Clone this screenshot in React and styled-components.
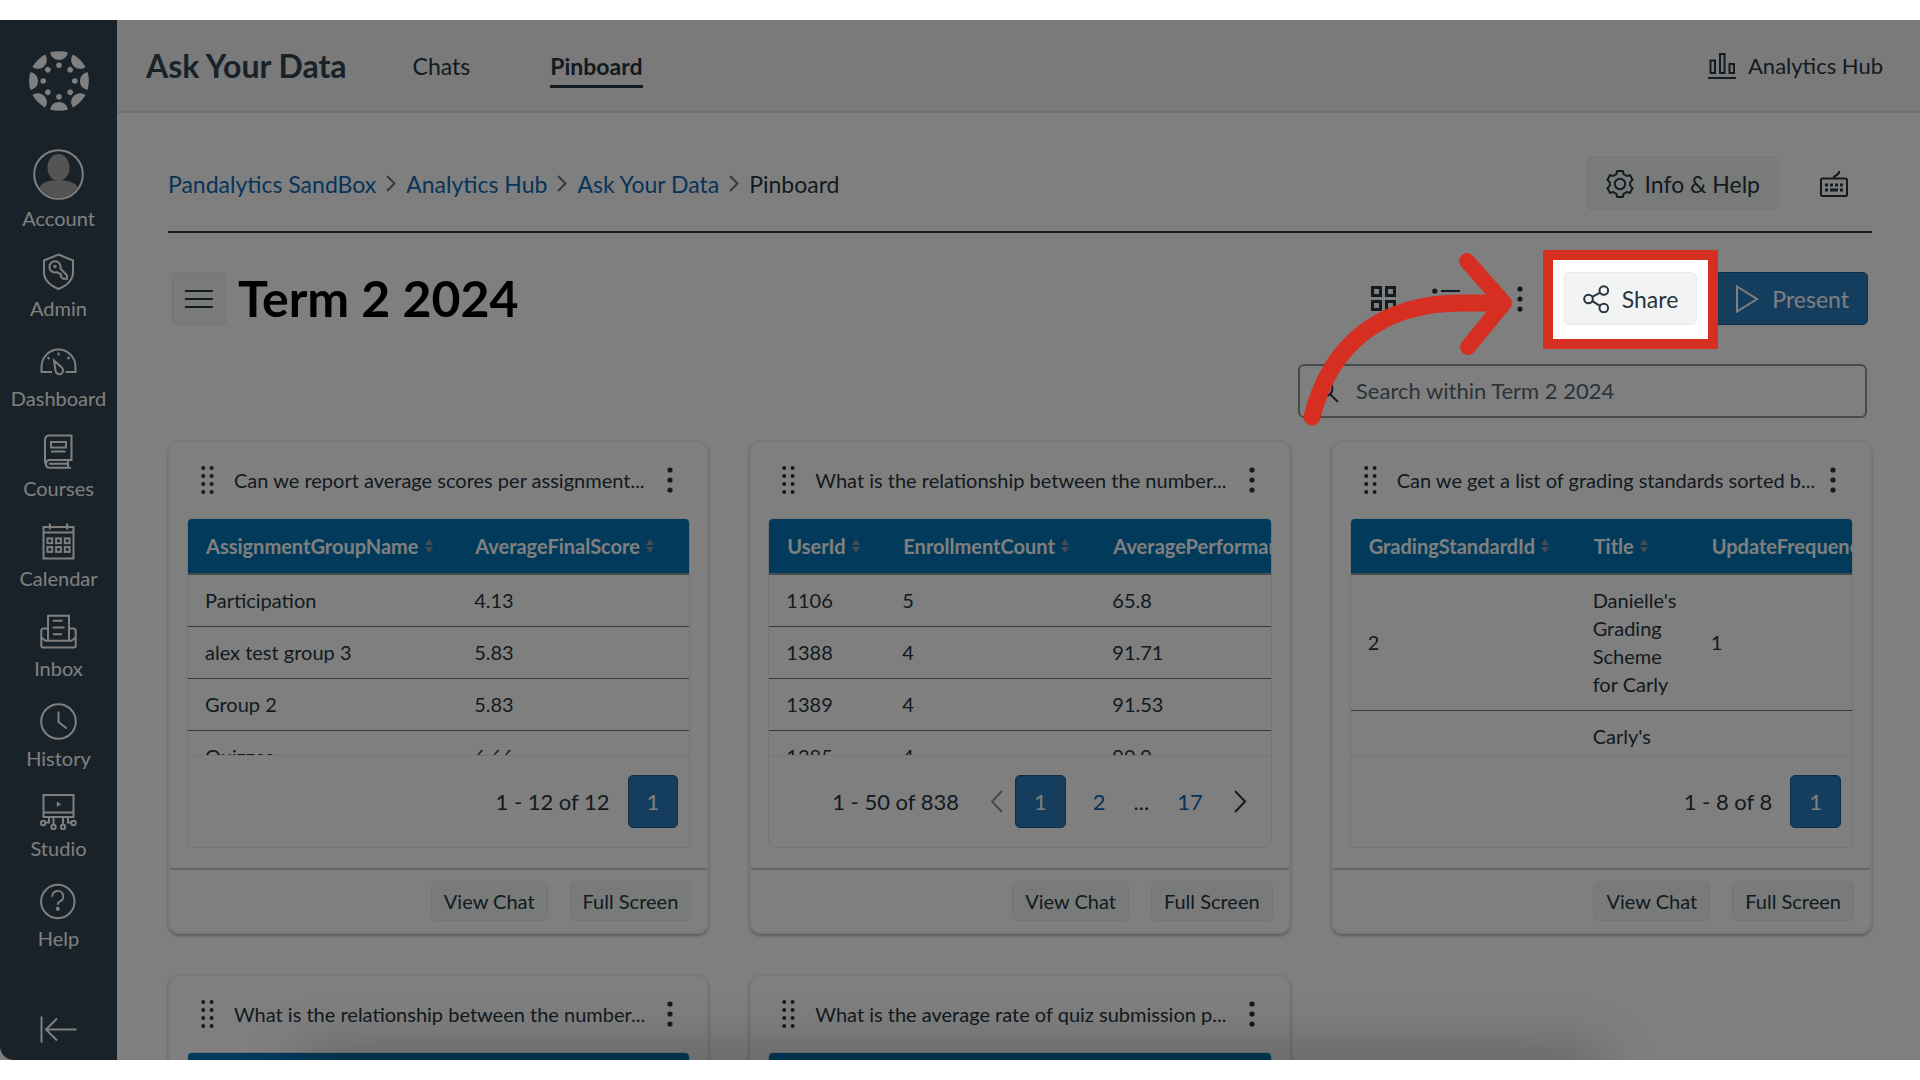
import React, { useState } from "react";
import styled, { createGlobalStyle, ThemeProvider } from "styled-components";

const theme = {
  colors: {
    white: "#ffffff",
    text: "#273540",
    title: "#334451",
    black: "#000000",
    link: "#0e68b3",
    primary: "#2b7abc",
    primaryDark: "#1d5c94",
    header: "#f5f5f5",
    secondary: "#f2f4f4",
    line: "#e8eaec",
    tableHead: "#0374b5",
    rowLine: "#6a7883",
    muted: "#8b969e",
    mark: "#d62f21",
  },
};

const GlobalStyle = createGlobalStyle`
  * {
    box-sizing: border-box;
    margin: 0;
    padding: 0;
  }
  body {
    background: #ffffff;
    font-family: Lato, "Liberation Sans", sans-serif;
    font-size: 22px;
    line-height: 28px;
    color: ${theme.colors.text};
  }
  button,
  input {
    font: inherit;
    color: inherit;
    border: 0;
    background: none;
  }
  button {
    cursor: pointer;
  }
  a {
    color: inherit;
    text-decoration: none;
  }
  svg {
    display: block;
    flex: none;
    fill: none;
    stroke: currentColor;
    stroke-width: 2;
  }
`;

/* ---------- icons ---------- */

const turns = [0, 45, 90, 135, 180, 225, 270, 315];

const CanvasLogo = () => (
  <svg width="60" height="60" viewBox="0 0 60 60">
    {turns.map((deg) => (
      <g
        key={deg}
        transform={`rotate(${deg} 30 30)`}
        fill="currentColor"
        stroke="none"
      >
        <path d="M21.2 1.3Q30 -1 38.8 1.3C38.2 6 34.6 9 30 9S21.8 6 21.2 1.3Z" />
        <circle cx="30" cy="14.2" r="2.8" />
      </g>
    ))}
  </svg>
);

const Avatar = () => (
  <svg width="51" height="51" viewBox="0 0 51 51">
    <clipPath id="avatar-clip">
      <circle cx="25.5" cy="25.5" r="23" />
    </clipPath>
    <g clipPath="url(#avatar-clip)" fill="#a8a8a8" stroke="none">
      <ellipse cx="25.5" cy="18.5" rx="11" ry="13.5" />
      <path d="M5 40C8 34 14 32 20 31.5H31C37 32 43 34 46 40V51H5Z" />
    </g>
    <circle cx="25.5" cy="25.5" r="24.3" />
  </svg>
);

const navIcons = {
  Admin: (
    <>
      <path d="M18.5 1.5L33 7.5V19C33 27 27 32.5 18.5 36C10 32.5 4 27 4 19V7.5Z" />
      <path d="M20.4 15.5L27 22.5V25.8H23.2L20.8 23.5V21.2L16.8 19.2A5.6 5.6 0 1 1 20.4 15.5Z" />
      <circle cx="15" cy="13.5" r="0.8" />
    </>
  ),
  Dashboard: (
    <>
      <path d="M12 29H1.5V24A17 17.5 0 0 1 35.5 24V29H25.5" />
      <path d="M14 17.5L21.8 24.5A3.8 3.8 0 1 1 15.5 27.5Z" />
      <path d="M18.5 9.5V12.5M7.5 14L9.5 16M29.5 14L27.5 16" />
    </>
  ),
  Courses: (
    <>
      <path d="M5 30.5V6.5A4 4 0 0 1 9 2.5H31.5V27H9A4 4 0 0 0 9 34.8H31" />
      <path d="M28 27V34.5M9 30.8H28M11 18.5H25.5" />
      <path d="M11 9H26V14.5H11Z" />
    </>
  ),
  Calendar: (
    <>
      <path d="M3.5 4H33.5V35.5H3.5ZM3.5 9.5H33.5M9.8 0.5V6.5M27.2 0.5V6.5" />
      {[9.8, 18.5, 27.2].map((x) =>
        [17.8, 26.5].map((y) => (
          <rect key={`${x}-${y}`} x={x - 2.4} y={y - 2.4} width="4.8" height="4.8" />
        ))
      )}
    </>
  ),
  Inbox: (
    <>
      <path d="M8 27.5V2.8H29V27.5" />
      <path d="M8 15.5H3.5A2.3 2.3 0 0 0 1.3 17.8V32.5A2 2 0 0 0 3.3 34.5H33.7A2 2 0 0 0 35.7 32.5V17.8A2.3 2.3 0 0 0 33.5 15.5H29" />
      <path d="M1.3 24.5L5.5 27.8H31.5L35.7 24.5M12.8 7.8H22.5M12.8 14.5H24.5M12.8 21.2H22" />
    </>
  ),
  History: (
    <>
      <circle cx="18.5" cy="18.5" r="17.3" />
      <path d="M18.5 8.5V19L26.8 25.5" />
    </>
  ),
  Studio: (
    <>
      <path d="M3.5 2H33.5V24H3.5ZM3.5 19.5H33.5" />
      <path d="M16.8 8.5L21.2 11.2L16.8 14Z" fill="currentColor" stroke="none" />
      <path d="M9 24V29.5H5.5M13.5 24V31.5M23 24V31.5M28 24V29.5H31" />
      <circle cx="3.2" cy="30" r="2.2" />
      <circle cx="13.5" cy="34" r="2.2" />
      <circle cx="23" cy="34" r="2.2" />
      <circle cx="33.5" cy="30" r="2.2" />
    </>
  ),
  Help: (
    <>
      <circle cx="17.8" cy="18.5" r="16.7" />
      <path d="M12.3 13.8A5.5 5.5 0 1 1 19.6 18.6Q17.8 19.5 17.8 21.8" />
      <circle cx="17.8" cy="25.8" r="1.1" fill="currentColor" />
    </>
  ),
};

const gearPoints = turns
  .slice(0, 6)
  .map((_, i) => {
    const point = (r, deg) => {
      const a = ((deg + i * 60 - 90) * Math.PI) / 180;
      return `${(14 + r * Math.cos(a)).toFixed(1)},${(14 + r * Math.sin(a)).toFixed(1)}`;
    };
    return [point(10.4, -20), point(13.3, -12), point(13.3, 12), point(10.4, 20)].join(" ");
  })
  .join(" ");

const GearIcon = () => (
  <svg width="28" height="28" viewBox="0 0 28 28" strokeLinejoin="round">
    <polygon points={gearPoints} />
    <circle cx="14" cy="14" r="5.2" />
  </svg>
);

const BarsIcon = () => (
  <svg width="28" height="28" viewBox="0 0 28 28">
    <path d="M2.5 8.5H7V21H2.5ZM12 2H16.5V21H12ZM21.5 12H26V21H21.5ZM0 26H28" />
  </svg>
);

const KeyboardIcon = () => (
  <svg width="28" height="28" viewBox="0 0 28 28">
    <rect x="1" y="8.5" width="26" height="17.5" rx="1.5" />
    <path d="M13.5 8.5C13.5 4.5 19.5 6 19.3 1" />
    <path d="M5 15H8M10 15H13M15 15H18M20 15H23M5 20H8M10 20H18M20 20H23" strokeWidth="3" />
  </svg>
);

const ShareIcon = () => (
  <svg width="28" height="28" viewBox="0 0 28 28">
    <circle cx="5.5" cy="14" r="4.3" />
    <circle cx="20.8" cy="5.5" r="4.3" />
    <circle cx="20.8" cy="23" r="4.3" />
    <path d="M9.3 11.8L17 7.6M9.3 16.2L17 20.9" />
  </svg>
);

const PlayIcon = () => (
  <svg width="28" height="28" viewBox="0 0 28 28">
    <path d="M4 1.5L24 14L4 26.5Z" />
  </svg>
);

const GridIcon = () => (
  <svg width="28" height="28" viewBox="0 0 28 28">
    <path
      d="M2.5 2.5H10.5V10.5H2.5ZM16.5 2.5H24.5V10.5H16.5ZM2.5 16.5H10.5V24.5H2.5ZM16.5 16.5H24.5V24.5H16.5Z"
      strokeWidth="3"
    />
  </svg>
);

const ListIcon = () => (
  <svg width="28" height="28" viewBox="0 0 28 28">
    <path d="M9 6H28M9 14H28M9 22H28" />
    {[6, 14, 22].map((y) => (
      <circle key={y} cx="2.8" cy={y} r="2.6" fill="currentColor" stroke="none" />
    ))}
  </svg>
);

const MenuIcon = () => (
  <svg width="28" height="28" viewBox="0 0 28 28">
    <path d="M0 6H28M0 14H28M0 22H28" />
  </svg>
);

const KebabIcon = () => (
  <svg width="6" height="28" viewBox="0 0 6 28">
    {[4, 14, 24].map((y) => (
      <circle key={y} cx="3" cy={y} r="2.6" fill="currentColor" stroke="none" />
    ))}
  </svg>
);

const DragIcon = () => (
  <svg width="13" height="28" viewBox="0 0 13 28">
    {[2, 10, 18, 26].map((y) => (
      <g key={y} fill="currentColor" stroke="none">
        <circle cx="2.2" cy={y} r="2" />
        <circle cx="10.6" cy={y} r="2" />
      </g>
    ))}
  </svg>
);

const SearchIcon = () => (
  <svg width="24" height="24" viewBox="0 0 24 24">
    <circle cx="9.5" cy="9.5" r="8" />
    <path d="M15 15L23 23" />
  </svg>
);

const CrumbChevron = () => (
  <svg width="10" height="17" viewBox="0 0 10 17">
    <path d="M1 1L8.5 8.5L1 16" />
  </svg>
);

const PageChevron = ({ left }) => (
  <svg width="13" height="23" viewBox="0 0 13 23">
    <path d={left ? "M12 1L2 11.5L12 22" : "M1 1L11 11.5L1 22"} />
  </svg>
);

const SortIcon = () => (
  <svg width="8" height="14" viewBox="0 0 8 14">
    <path d="M4 0L8 6H0ZM4 14L8 8H0Z" fill={theme.colors.muted} stroke="none" />
  </svg>
);

const PointerArrow = () => (
  <Pointer width="216" height="180" viewBox="0 0 216 180">
    <path d="M8 165C26 93 76 51 158 51H196" strokeWidth="17" />
    <path d="M163 9L200 51L164 95" strokeWidth="16" />
  </Pointer>
);

/* ---------- data ---------- */

const navItems = ["Account", "Admin", "Dashboard", "Courses", "Calendar", "Inbox", "History", "Studio", "Help"];

const crumbs = ["Pandalytics SandBox", "Analytics Hub", "Ask Your Data"];

const cards = [
  {
    title: "Can we report average scores per assignment...",
    columns: [
      { name: "AssignmentGroupName", width: 269 },
      { name: "AverageFinalScore", width: 232 },
    ],
    rows: [
      ["Participation", "4.13"],
      ["alex test group 3", "5.83"],
      ["Group 2", "5.83"],
      ["Quizzes", "6.66"],
    ],
    range: "1 - 12 of 12",
  },
  {
    title: "What is the relationship between the number...",
    columns: [
      { name: "UserId", width: 116 },
      { name: "EnrollmentCount", width: 210 },
      { name: "AveragePerformance", width: 250 },
    ],
    rows: [
      ["1106", "5", "65.8"],
      ["1388", "4", "91.71"],
      ["1389", "4", "91.53"],
      ["1385", "4", "90.9"],
    ],
    range: "1 - 50 of 838",
    lastPage: 17,
  },
  {
    title: "Can we get a list of grading standards sorted b...",
    columns: [
      { name: "GradingStandardId", width: 225 },
      { name: "Title", width: 118 },
      { name: "UpdateFrequency", width: 230 },
    ],
    rows: [
      ["2", "Danielle's Grading Scheme for Carly", "1"],
      ["", "Carly's Grading Scheme", ""],
    ],
    range: "1 - 8 of 8",
  },
  {
    title: "What is the relationship between the number...",
    columns: [{ width: 501 }],
    rows: [],
  },
  {
    title: "What is the average rate of quiz submission p...",
    columns: [{ width: 501 }],
    rows: [],
  },
];

/* ---------- parts ---------- */

function Pagination({ range, lastPage }) {
  const [page, setPage] = useState(1);
  const pageProps = (n) => ({
    $active: page === n,
    "aria-current": page === n ? "page" : undefined,
    onClick: () => setPage(n),
  });
  return (
    <Pager>
      <span>{range}</span>
      <Pages>
        {lastPage && (
          <PageArrow aria-label="Previous page" $off={page === 1}>
            <PageChevron left />
          </PageArrow>
        )}
        <PageButton {...pageProps(1)}>1</PageButton>
        {lastPage && (
          <>
            <PageButton {...pageProps(2)}>2</PageButton>
            <Dots>...</Dots>
            <PageButton {...pageProps(lastPage)}>{lastPage}</PageButton>
            <PageArrow aria-label="Next page">
              <PageChevron />
            </PageArrow>
          </>
        )}
      </Pages>
    </Pager>
  );
}

function PinCard({ card }) {
  return (
    <Card>
      <CardHead>
        <DragIcon />
        <CardTitle>{card.title}</CardTitle>
        <KebabButton aria-label="Pin options">
          <KebabIcon />
        </KebabButton>
      </CardHead>
      <TableBox>
        <TableScroll>
          <Table>
            <colgroup>
              {card.columns.map((col, i) => (
                <col key={i} style={{ width: col.width }} />
              ))}
            </colgroup>
            <thead>
              <tr>
                {card.columns.map((col, i) => (
                  <th key={i}>
                    {col.name && (
                      <SortButton>
                        {col.name}
                        <SortIcon />
                      </SortButton>
                    )}
                  </th>
                ))}
              </tr>
            </thead>
            <tbody>
              {card.rows.map((row, i) => (
                <tr key={i}>
                  {row.map((cell, j) => (
                    <td key={j}>{cell}</td>
                  ))}
                </tr>
              ))}
            </tbody>
          </Table>
        </TableScroll>
        {card.range && <Pagination range={card.range} lastPage={card.lastPage} />}
      </TableBox>
      <CardFoot>
        <SmallButton>View Chat</SmallButton>
        <SmallButton>Full Screen</SmallButton>
      </CardFoot>
    </Card>
  );
}

function Sidebar() {
  return (
    <SideNav aria-label="Global navigation">
      <LogoLink href="#home" aria-label="Home">
        <CanvasLogo />
      </LogoLink>
      {navItems.map((item) => (
        <NavItem key={item} href={`#${item.toLowerCase()}`}>
          {item === "Account" ? (
            <Avatar />
          ) : (
            <svg width="37" height="37" viewBox="0 0 37 37">
              {navIcons[item]}
            </svg>
          )}
          {item}
        </NavItem>
      ))}
      <Collapse aria-label="Minimize global navigation">
        <svg width="37" height="37" viewBox="0 0 37 37">
          <path d="M1.5 5.5V31.5M36.5 18.5H6M17 7.5L6 18.5L17 29.5" />
        </svg>
      </Collapse>
    </SideNav>
  );
}

function App() {
  return (
    <ThemeProvider theme={theme}>
      <GlobalStyle />
      <Page>
        <Window>
          <Sidebar />
          <Main>
            <TopBar>
              <AppName>Ask Your Data</AppName>
              <Tabs>
                <Tab href="#chats">Chats</Tab>
                <Tab href="#pinboard" $active>
                  Pinboard
                </Tab>
              </Tabs>
              <HubLink href="#hub">
                <BarsIcon />
                Analytics Hub
              </HubLink>
            </TopBar>
            <Content>
              <CrumbRow>
                <Crumbs aria-label="Breadcrumb">
                  {crumbs.map((crumb) => (
                    <React.Fragment key={crumb}>
                      <CrumbLink href="#crumb">{crumb}</CrumbLink>
                      <CrumbChevron />
                    </React.Fragment>
                  ))}
                  <span>Pinboard</span>
                </Crumbs>
                <Button>
                  <GearIcon />
                  Info &amp; Help
                </Button>
                <IconButton aria-label="Keyboard shortcuts">
                  <KeyboardIcon />
                </IconButton>
              </CrumbRow>
              <TitleRow>
                <MenuButton aria-label="Pinboards">
                  <MenuIcon />
                </MenuButton>
                <Title>Term 2 2024</Title>
                <Toolbar>
                  <ViewToggle>
                    <IconButton aria-label="Grid view">
                      <GridIcon />
                    </IconButton>
                    <IconButton aria-label="List view">
                      <ListIcon />
                    </IconButton>
                  </ViewToggle>
                  <IconButton aria-label="Pinboard options">
                    <KebabIcon />
                  </IconButton>
                  <Spotlight>
                    <Button>
                      <ShareIcon />
                      Share
                    </Button>
                    <PointerArrow />
                  </Spotlight>
                  <Button $primary>
                    <PlayIcon />
                    Present
                  </Button>
                </Toolbar>
              </TitleRow>
              <SearchBox>
                <SearchIcon />
                <input type="search" aria-label="Search pinboard" placeholder="Search within Term 2 2024" />
              </SearchBox>
              <CardGrid>
                {cards.map((card, i) => (
                  <PinCard key={i} card={card} />
                ))}
              </CardGrid>
            </Content>
          </Main>
          <Dim>
            <DockShade />
          </Dim>
        </Window>
      </Page>
    </ThemeProvider>
  );
}

const Page = styled.div`
  height: 100vh;
  padding: 20px 0;
`;

const Window = styled.div`
  height: 100%;
  display: flex;
  position: relative;
  overflow: hidden;
  background: ${(props) => props.theme.colors.white};
`;

const Dim = styled.div`
  position: absolute;
  inset: 0;
  z-index: 1;
  overflow: hidden;
  pointer-events: none;
  background: rgba(0, 0, 0, 0.5);
`;

const DockShade = styled.div`
  position: absolute;
  top: 100%;
  left: 16%;
  right: 17%;
  height: 40px;
  box-shadow: 0 0 60px 4px rgba(0, 0, 0, 0.3);
`;

const SideNav = styled.nav`
  width: 117px;
  flex: none;
  display: flex;
  flex-direction: column;
  align-items: center;
  padding: 31px 0 12px;
  border-radius: 0 0 0 14px;
  background: ${(props) => props.theme.colors.title};
  color: ${(props) => props.theme.colors.white};
`;

const LogoLink = styled.a`
  margin-bottom: 29px;
`;

const NavItem = styled.a`
  height: 90px;
  display: flex;
  flex-direction: column;
  align-items: center;
  justify-content: flex-end;
  gap: 6px;
  font-size: 20px;
  line-height: 24px;
`;

const Collapse = styled.button`
  margin-top: auto;
`;

const Main = styled.main`
  flex: 1;
  min-width: 0;
  overflow: hidden;
`;

const TopBar = styled.header`
  height: 93px;
  display: flex;
  align-items: center;
  padding: 0 37px 0 29px;
  background: ${(props) => props.theme.colors.header};
  border-bottom: 2px solid #dddfe0;
`;

const AppName = styled.h2`
  font-size: 32px;
  font-weight: 700;
  line-height: 40px;
  color: ${(props) => props.theme.colors.title};
`;

const Tabs = styled.nav`
  display: flex;
  gap: 80px;
  margin-left: 66px;
  font-size: 23px;
`;

const Tab = styled.a`
  padding: 9px 0 5px;
  font-weight: ${(props) => (props.$active ? 700 : 400)};
  border-bottom: 3px solid ${(props) => (props.$active ? props.theme.colors.text : "transparent")};
`;

const HubLink = styled.a`
  display: flex;
  align-items: center;
  gap: 12px;
  margin-left: auto;
`;

const Content = styled.div`
  padding: 44px 48px 0 51px;
`;

const CrumbRow = styled.div`
  display: flex;
  align-items: center;
  gap: 28px;
  padding: 0 12px 21px 0;
  border-bottom: 2px solid ${(props) => props.theme.colors.text};
`;

const Crumbs = styled.nav`
  display: flex;
  align-items: center;
  gap: 10px;
  margin-right: auto;
  font-size: 23px;

  svg {
    color: ${(props) => props.theme.colors.rowLine};
  }
`;

const CrumbLink = styled.a`
  color: ${(props) => props.theme.colors.link};
`;

const Button = styled.button`
  height: 53px;
  display: flex;
  align-items: center;
  gap: 11px;
  padding: 0 18px;
  border: 1px solid ${(props) => (props.$primary ? props.theme.colors.primaryDark : props.theme.colors.line)};
  border-radius: 5px;
  background: ${(props) => (props.$primary ? props.theme.colors.primary : props.theme.colors.secondary)};
  color: ${(props) => (props.$primary ? props.theme.colors.white : props.theme.colors.text)};
  font-size: 23px;
`;

const MenuButton = styled(Button)`
  padding: 0 12px;
`;

const IconButton = styled.button`
  width: 53px;
  height: 53px;
  display: flex;
  align-items: center;
  justify-content: center;
`;

const SmallButton = styled.button`
  height: 40px;
  padding: 0 12px;
  border: 1px solid ${(props) => props.theme.colors.line};
  border-radius: 5px;
  background: ${(props) => props.theme.colors.secondary};
  font-size: 20px;
`;

const TitleRow = styled.div`
  display: flex;
  align-items: center;
  gap: 12px;
  margin-top: 39px;
  padding: 0 4px;
`;

const Title = styled.h1`
  font-size: 50px;
  line-height: 53px;
  font-weight: 700;
  color: ${(props) => props.theme.colors.black};
`;

const Toolbar = styled.div`
  display: flex;
  gap: 17px;
  margin-left: auto;
`;

const ViewToggle = styled.div`
  display: flex;
  gap: 9px;
  margin-right: 4px;
`;

/* Sits above the dimmed page with a frame round the button */
const Spotlight = styled.div`
  position: relative;
  z-index: 2;

  &::before {
    content: "";
    position: absolute;
    inset: -22px -21px -24px;
    z-index: -1;
    border: 10px solid ${(props) => props.theme.colors.mark};
    background: ${(props) => props.theme.colors.white};
  }
`;

const Pointer = styled.svg`
  position: absolute;
  top: -20px;
  right: 177px;
  color: ${(props) => props.theme.colors.mark};
  stroke-linecap: round;
  stroke-linejoin: round;
  pointer-events: none;
`;

const SearchBox = styled.label`
  width: 569px;
  height: 54px;
  display: flex;
  align-items: center;
  gap: 17px;
  margin: 39px 5px 0 auto;
  padding: 0 15px;
  border: 2px solid ${(props) => props.theme.colors.muted};
  border-radius: 6px;

  input {
    flex: 1;
    min-width: 0;
    outline: none;
  }
  input::placeholder {
    color: #576773;
    opacity: 1;
  }
`;

const CardGrid = styled.div`
  display: grid;
  grid-template-columns: repeat(3, minmax(0, 1fr));
  align-items: start;
  gap: 40px;
  margin-top: 22px;
`;

const Card = styled.section`
  border: 2px solid #f0f1f2;
  border-radius: 12px;
  box-shadow: 0 2px 3px rgba(0, 0, 0, 0.3);
`;

const CardHead = styled.div`
  height: 76px;
  display: flex;
  align-items: center;
  padding: 0 22px 0 31px;
`;

const CardTitle = styled.h3`
  flex: 1;
  min-width: 0;
  margin-left: 20px;
  white-space: nowrap;
  font-size: 20px;
  font-weight: 400;
`;

const KebabButton = styled.button`
  width: 30px;
  height: 44px;
  display: flex;
  align-items: center;
  justify-content: center;
`;

const TableBox = styled.div`
  margin: 0 17px 20px;
  border: 1px solid ${(props) => props.theme.colors.line};
  border-radius: 5px;
  overflow: hidden;
`;

const TableScroll = styled.div`
  height: 237px;
  overflow: hidden;
  border-bottom: 1px solid ${(props) => props.theme.colors.line};
`;

const Table = styled.table`
  width: 100%;
  table-layout: fixed;
  border-collapse: separate;
  border-spacing: 0;
  font-size: 20px;

  thead {
    background: ${(props) => props.theme.colors.tableHead};
    color: ${(props) => props.theme.colors.white};
  }
  tr {
    height: 52px;
  }
  thead tr {
    height: 56px;
  }
  th {
    padding: 0 0 0 18px;
    text-align: left;
    white-space: nowrap;
    border-bottom: 2px solid ${(props) => props.theme.colors.muted};
  }
  td {
    padding: 11px 12px 12px 17px;
    border-bottom: 1px solid ${(props) => props.theme.colors.rowLine};
  }
`;

const SortButton = styled.button`
  display: flex;
  align-items: center;
  gap: 6px;
  font-weight: 700;
`;

const Pager = styled.div`
  height: 91px;
  display: flex;
  align-items: center;
  justify-content: flex-end;
  gap: 18px;
  padding-right: 11px;
`;

const Pages = styled.div`
  display: flex;
  align-items: center;
`;

const PageButton = styled.button`
  min-width: 50px;
  height: 53px;
  padding: 0 18px;
  border-radius: 5px;
  border: 1px solid ${(props) => (props.$active ? props.theme.colors.primaryDark : "transparent")};
  background: ${(props) => (props.$active ? props.theme.colors.primary : "transparent")};
  color: ${(props) => (props.$active ? props.theme.colors.white : props.theme.colors.link)};

  &[aria-current] + & {
    margin-left: 8px;
  }
`;

const PageArrow = styled.button`
  width: 38px;
  height: 53px;
  display: flex;
  align-items: center;
  justify-content: center;
  color: ${(props) => (props.$off ? props.theme.colors.muted : props.theme.colors.text)};
`;

const Dots = styled.span`
  padding: 0 9px;
`;

const CardFoot = styled.div`
  display: flex;
  justify-content: flex-end;
  gap: 22px;
  padding: 11px 16px;
  border-top: 2px solid #c7cdd1;
`;

export default App;
